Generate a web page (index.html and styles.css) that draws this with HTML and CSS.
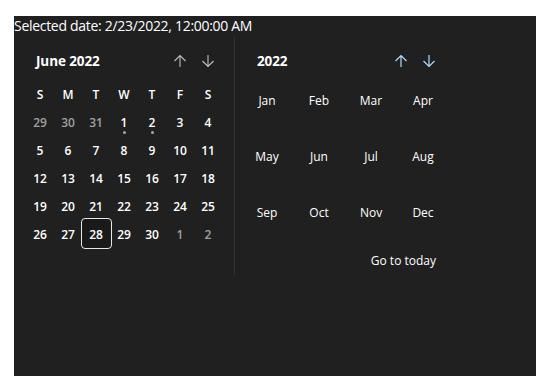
FILE: index.html
```html
<!DOCTYPE html>
<html>
<head>
<meta charset="utf-8">
<link rel="stylesheet" href="styles.css">
</head>
<body>
<div class="app">
  <div class="selected">Selected date: 2/23/2022, 12:00:00 AM</div>
  <div class="calendar">
    <div class="month-view">
      <div class="header">
        <span class="title">June 2022</span>
        <span class="nav">
          <span class="btn"><svg width="14" height="14" viewBox="0 0 14 14"><path d="M7 13V1.5M1.5 7L7 1.5L12.5 7" fill="none" stroke="#bdbdbd" stroke-width="1.1"/></svg></span>
          <span class="btn"><svg width="14" height="14" viewBox="0 0 14 14"><path d="M7 1V12.5M1.5 7L7 12.5L12.5 7" fill="none" stroke="#bdbdbd" stroke-width="1.1"/></svg></span>
        </span>
      </div>
      <div class="days">
        <span class="dow">S</span><span class="dow">M</span><span class="dow">T</span><span class="dow">W</span><span class="dow">T</span><span class="dow">F</span><span class="dow">S</span>
        <span class="day out">29</span><span class="day out">30</span><span class="day out">31</span><span class="day mark">1</span><span class="day mark">2</span><span class="day">3</span><span class="day">4</span>
        <span class="day">5</span><span class="day">6</span><span class="day">7</span><span class="day">8</span><span class="day">9</span><span class="day">10</span><span class="day">11</span>
        <span class="day">12</span><span class="day">13</span><span class="day">14</span><span class="day">15</span><span class="day">16</span><span class="day">17</span><span class="day">18</span>
        <span class="day">19</span><span class="day">20</span><span class="day">21</span><span class="day">22</span><span class="day">23</span><span class="day">24</span><span class="day">25</span>
        <span class="day">26</span><span class="day">27</span><span class="day focus">28</span><span class="day">29</span><span class="day">30</span><span class="day out">1</span><span class="day out">2</span>
      </div>
    </div>
    <div class="divider"></div>
    <div class="year-view">
      <div class="header">
        <span class="title">2022</span>
        <span class="nav">
          <span class="btn"><svg width="14" height="14" viewBox="0 0 14 14"><path d="M7 13V1.5M1.5 7L7 1.5L12.5 7" fill="none" stroke="#a8dcff" stroke-width="1.2"/></svg></span>
          <span class="btn"><svg width="14" height="14" viewBox="0 0 14 14"><path d="M7 1V12.5M1.5 7L7 12.5L12.5 7" fill="none" stroke="#a8dcff" stroke-width="1.2"/></svg></span>
        </span>
      </div>
      <div class="months">
        <span>Jan</span><span>Feb</span><span>Mar</span><span>Apr</span>
        <span>May</span><span>Jun</span><span>Jul</span><span>Aug</span>
        <span>Sep</span><span>Oct</span><span>Nov</span><span>Dec</span>
      </div>
      <div class="today">Go to today</div>
    </div>
  </div>
</div>
</body>
</html>
```

FILE: styles.css
```css
html, body {
  margin: 0;
  padding: 0;
  background: #ffffff;
}
body {
  font-family: "Open Sans", "Noto Sans", sans-serif;
  color: #ffffff;
}
.app {
  margin: 16px 0 0 14px;
  width: 522px;
  height: 360px;
  background: #202020;
}
.selected {
  height: 21px;
  font-size: 14px;
  line-height: 19px;
  letter-spacing: -0.3px;
}
.calendar {
  display: flex;
  height: 238px;
}
.month-view {
  width: 196px;
  padding: 10px 12px 0 12px;
}
.header {
  display: flex;
  align-items: center;
  justify-content: space-between;
  height: 28px;
}
.month-view .header {
  padding-left: 10px;
}
.title {
  font-size: 13.5px;
  font-weight: 700;
  letter-spacing: -0.1px;
}
.nav {
  display: flex;
}
.btn {
  width: 28px;
  height: 28px;
  display: flex;
  align-items: center;
  justify-content: center;
}
.btn svg {
  display: block;
}
.days {
  margin-top: 5px;
  display: grid;
  grid-template-columns: repeat(7, 28px);
  grid-auto-rows: 28px;
}
.dow, .day {
  display: flex;
  align-items: center;
  justify-content: center;
  font-size: 12px;
  font-weight: 600;
  position: relative;
}
.day.out {
  color: #a0a0a0;
}
.day.mark::after {
  content: "";
  position: absolute;
  left: 12.5px;
  bottom: 2px;
  width: 3px;
  height: 3px;
  border-radius: 50%;
  background: #a8a8a8;
}
.day.focus {
  z-index: 0;
}
.day.focus::before {
  content: "";
  position: absolute;
  left: -1px;
  top: -2px;
  width: 29px;
  height: 29px;
  border: 1px solid #e8e8e8;
  border-radius: 4px;
  background: #1a1a1a;
  z-index: -1;
}
.divider {
  width: 1px;
  background: #333333;
}
.year-view {
  width: 220px;
  padding-top: 10px;
}
.year-view .header {
  padding: 0 12px 0 22px;
}
.months {
  margin: 5px 6px 0 6px;
  display: grid;
  grid-template-columns: repeat(4, 52px);
  grid-auto-rows: 40px;
  row-gap: 16px;
  font-size: 12px;
}
.months span {
  display: flex;
  align-items: center;
  justify-content: center;
}
.today {
  margin-top: 20px;
  text-align: right;
  padding-right: 19px;
  font-size: 12px;
  line-height: 18px;
}
```
